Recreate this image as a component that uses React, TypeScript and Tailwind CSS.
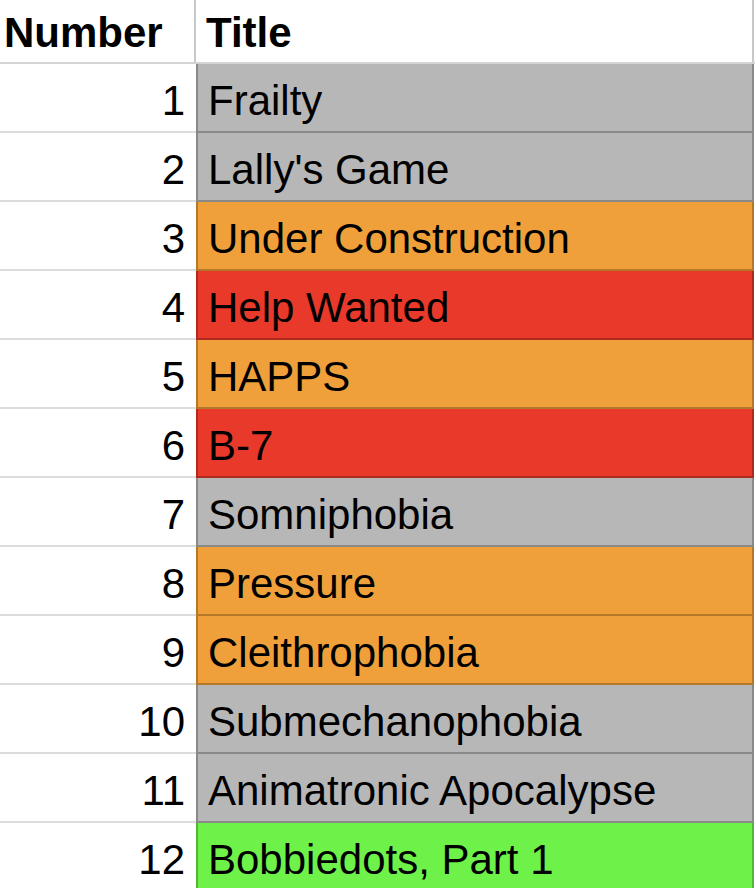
import React from "react";

const rows: { n: number; t: string; c: string }[] = [
  { n: 1, t: "Frailty", c: "bg-[#b7b7b7]" },
  { n: 2, t: "Lally's Game", c: "bg-[#b7b7b7]" },
  { n: 3, t: "Under Construction", c: "bg-[#f0a03a]" },
  { n: 4, t: "Help Wanted", c: "bg-[#e8392a]" },
  { n: 5, t: "HAPPS", c: "bg-[#f0a03a]" },
  { n: 6, t: "B-7", c: "bg-[#e8392a]" },
  { n: 7, t: "Somniphobia", c: "bg-[#b7b7b7]" },
  { n: 8, t: "Pressure", c: "bg-[#f0a03a]" },
  { n: 9, t: "Cleithrophobia", c: "bg-[#f0a03a]" },
  { n: 10, t: "Submechanophobia", c: "bg-[#b7b7b7]" },
  { n: 11, t: "Animatronic Apocalypse", c: "bg-[#b7b7b7]" },
  { n: 12, t: "Bobbiedots, Part 1", c: "bg-[#6ef24a]" },
];

export default function App() {
  return (
    <div
      className="w-[755px] h-[888px] overflow-hidden bg-white text-black text-[42px] leading-none"
      style={{ fontFamily: '"Liberation Sans", Arial, sans-serif' }}
    >
      <div className="flex h-[64px] border-b-2 border-[#d4d4d4]">
        <div className="w-[196px] shrink-0 border-r-2 border-[#c8c8c8] flex items-center pl-[4px] pt-[3px] font-bold">
          Number
        </div>
        <div className="flex-1 flex items-center pl-[10px] pt-[3px] font-bold border-r-2 border-[#c8c8c8] mr-[1px]">
          Title
        </div>
      </div>
      {rows.map((r) => (
        <div key={r.n} className="flex h-[69px]">
          <div className="w-[196px] shrink-0 border-b-2 border-[#dcdcdc] flex items-center justify-end pr-[11px] pt-[6px]">
            {r.n}
          </div>
          <div
            className={`flex-1 mr-[1px] flex items-center pl-[10px] pt-[6px] border-2 border-t-0 border-black/25 ${r.c}`}
          >
            {r.t}
          </div>
        </div>
      ))}
    </div>
  );
}
